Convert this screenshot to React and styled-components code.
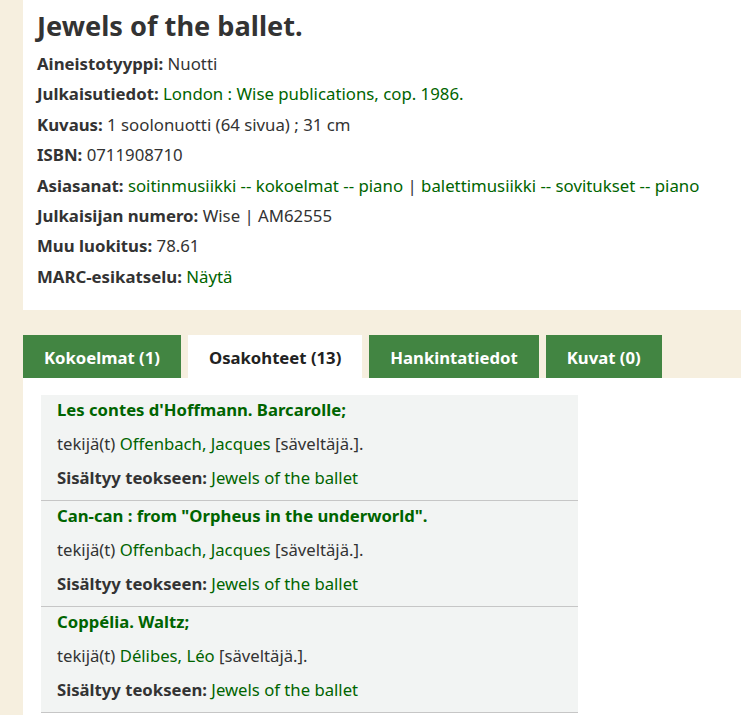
import { createGlobalStyle, styled } from "styled-components";

const GlobalStyle = createGlobalStyle`
  body {
    margin: 0;
    background-color: #f6efdf;
    font-family: "Noto Sans", "Open Sans", sans-serif;
    color: #333;
  }
`;

const Page = styled.div`
  padding-left: 23px;
  width: 718px;
`;

const DetailPanel = styled.div`
  background-color: white;
  padding: 9px 14px 18px;
  height: 283px;
  box-sizing: content-box;

  h1 {
    margin: 0 0 6px;
    font-size: 27.2px;
    line-height: 34px;
    font-weight: 700;
    color: #333;
  }
`;

const MetaRow = styled.div`
  font-size: 16.8px;
  line-height: 30.4px;
  white-space: nowrap;

  b {
    color: #333;
  }
`;

const Link = styled.span`
  color: #006400;
`;

const TabBar = styled.div`
  display: flex;
  gap: 7px;
  padding-top: 25px;
`;

const Tab = styled.div`
  height: 43px;
  padding: 1px 21px 0;
  box-sizing: border-box;
  display: flex;
  align-items: center;
  font-size: 16.7px;
  font-weight: 700;
  background-color: ${(p) => (p.$active ? "white" : "#428542")};
  color: ${(p) => (p.$active ? "#222" : "white")};
`;

const TabContent = styled.div`
  background-color: white;
  padding: 17px 0 0 18px;
  height: 320px;
`;

const Item = styled.div`
  width: 521px;
  padding: 3px 0 10px 16px;
  background-color: #f2f4f3;
  border-bottom: 1px solid #c6c6c6;

  p {
    margin: 0 0 10px;
    font-size: 16.7px;
    line-height: 24px;
  }
  p:last-child {
    margin-bottom: 0;
  }
`;

const ItemTitle = styled.p`
  font-weight: 700;
  color: #006400;
`;

const meta = [
  ["Aineistotyyppi:", "Nuotti", false],
  ["Julkaisutiedot:", "London : Wise publications, cop. 1986.", true],
  ["Kuvaus:", "1 soolonuotti (64 sivua) ; 31 cm", false],
  ["ISBN:", "0711908710", false],
  ["Julkaisijan numero:", "Wise | AM62555", false],
  ["Muu luokitus:", "78.61", false],
  ["MARC-esikatselu:", "Näytä", true],
];

const items = [
  { title: "Les contes d'Hoffmann. Barcarolle;", author: "Offenbach, Jacques" },
  { title: 'Can-can : from "Orpheus in the underworld".', author: "Offenbach, Jacques" },
  { title: "Coppélia. Waltz;", author: "Délibes, Léo" },
];

const tabs = ["Kokoelmat (1)", "Osakohteet (13)", "Hankintatiedot", "Kuvat (0)"];

function Meta({ label, value, link }) {
  return (
    <MetaRow>
      <b>{label}</b> {link ? <Link>{value}</Link> : value}
    </MetaRow>
  );
}

export default function App() {
  return (
    <>
      <GlobalStyle />
      <Page>
        <DetailPanel>
          <h1>Jewels of the ballet.</h1>
          {meta.slice(0, 4).map(([l, v, k]) => (
            <Meta key={l} label={l} value={v} link={k} />
          ))}
          <MetaRow>
            <b>Asiasanat:</b> <Link>soitinmusiikki -- kokoelmat -- piano</Link> |{" "}
            <Link>balettimusiikki -- sovitukset -- piano</Link>
          </MetaRow>
          {meta.slice(4).map(([l, v, k]) => (
            <Meta key={l} label={l} value={v} link={k} />
          ))}
        </DetailPanel>

        <TabBar>
          {tabs.map((t, i) => (
            <Tab key={t} $active={i === 1}>{t}</Tab>
          ))}
        </TabBar>

        <TabContent>
          {items.map((it) => (
            <Item key={it.title}>
              <ItemTitle>{it.title}</ItemTitle>
              <p>
                tekijä(t) <Link>{it.author}</Link> [säveltäjä.].
              </p>
              <p>
                <b>Sisältyy teokseen:</b> <Link>Jewels of the ballet</Link>
              </p>
            </Item>
          ))}
        </TabContent>
      </Page>
    </>
  );
}
